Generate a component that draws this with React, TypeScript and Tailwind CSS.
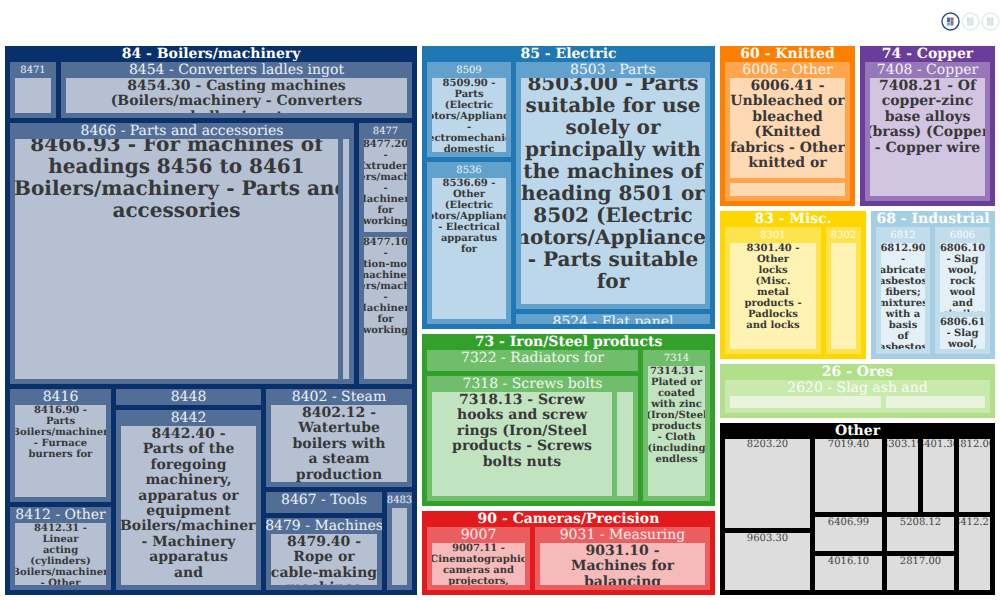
type N = { r: [number, number, number, number]; t?: string; lines?: string[]; size?: 10 | 14 | 20; tsize?: 10 | 14; kids?: N[] };
type G = N & { bg: string; mid: string; leaf: string };

const F: Record<number, string> = {
  10: "text-[10px] leading-[11px]",
  14: "text-[14px] leading-[15.4px]",
  20: "text-[20px] leading-[22px]",
};
const OFF: Record<number, string> = { 10: "mt-0", 14: "mt-[1px]", 20: "-mt-[6px]" };

function pos(r: N["r"], p: N["r"]) {
  return { left: r[0] - p[0], top: r[1] - p[1], width: r[2] - r[0], height: r[3] - r[1] };
}

function Line({ s }: { s: string }) {
  return (
    <div className="flex justify-center whitespace-pre">
      <span className="shrink-0">{s}</span>
    </div>
  );
}

function Leaf({ n, p, g }: { n: N; p: N["r"]; g: G }) {
  const s = n.size ?? 10;
  return (
    <div className={`absolute overflow-hidden ${g.leaf}`} style={pos(n.r, p)}>
      <div className={`${F[s]} ${OFF[s]} font-bold text-[#383838]`}>
        {(n.lines ?? []).map((l, i) => (
          <Line key={i} s={l} />
        ))}
      </div>
    </div>
  );
}

function Mid({ n, p, g }: { n: N; p: N["r"]; g: G }) {
  const ts = n.tsize ?? 14;
  return (
    <div className={`absolute overflow-hidden ${g.mid}`} style={pos(n.r, p)}>
      <div className={`h-4 ${ts === 14 ? "text-[14px] leading-[16px]" : "text-[10px] leading-[18px]"} text-white/90`}>
        <Line s={n.t ?? ""} />
      </div>
      {(n.kids ?? []).map((k, i) => (
        <Leaf key={i} n={k} p={n.r} g={g} />
      ))}
    </div>
  );
}

function Group({ g }: { g: G }) {
  return (
    <div className={`absolute overflow-hidden ${g.bg}`} style={pos(g.r, [0, 0, 0, 0])}>
      <div className="h-4 text-[14px] leading-[17px] font-bold text-white">
        <Line s={g.t ?? ""} />
      </div>
      {(g.kids ?? []).map((k, i) =>
        k.kids ? <Mid key={i} n={k} p={g.r} g={g} /> : <OtherLeaf key={i} n={k} p={g.r} />
      )}
    </div>
  );
}

function OtherLeaf({ n, p }: { n: N; p: N["r"] }) {
  return (
    <div className="absolute overflow-hidden bg-[#dddddd] text-[10px] leading-[11px] text-[#444444]" style={pos(n.r, p)}>
      <div className="mt-0">
        <Line s={n.t ?? ""} />
      </div>
    </div>
  );
}

const groups: G[] = [
  {
    t: "84 - Boilers/machinery", r: [5, 46, 417, 595], bg: "bg-[#08306b]", mid: "bg-[#526e97]", leaf: "bg-[#b5c1d3]",
    kids: [
      { t: "8471", tsize: 10, r: [10, 62, 56, 118], kids: [{ r: [15, 78, 51, 113] }] },
      { t: "8454 - Converters ladles ingot", r: [61, 62, 412, 118], kids: [{ r: [66, 78, 407, 113], size: 14, lines: ["8454.30 - Casting machines", "(Boilers/machinery - Converters", "ladles ingot"] }] },
      { t: "8466 - Parts and accessories", r: [10, 123, 354, 384], kids: [
        { r: [15, 139, 338, 379], size: 20, lines: ["8466.93 - For machines of", "headings 8456 to 8461", "(Boilers/machinery - Parts and", "accessories"] },
        { r: [343, 139, 349, 379] },
      ] },
      { t: "8477", tsize: 10, r: [359, 123, 412, 384], kids: [
        { r: [364, 139, 407, 232], lines: ["8477.20", "-", "Extruders", "(Boilers/machinery", "-", "Machinery", "for", "working"] },
        { r: [364, 237, 407, 379], lines: ["8477.10", "-", "Injection-molding", "machines", "(Boilers/machinery", "-", "Machinery", "for", "working"] },
      ] },
      { t: "8416", r: [10, 389, 111, 502], kids: [{ r: [15, 405, 106, 497], lines: ["8416.90 -", "Parts", "(Boilers/machinery", "- Furnace", "burners for"] }] },
      { t: "8412 - Other", r: [10, 507, 111, 590], kids: [{ r: [15, 523, 106, 585], lines: ["8412.31 -", "Linear", "acting", "(cylinders)", "(Boilers/machinery", "- Other"] }] },
      { t: "8448", r: [116, 389, 261, 405], kids: [] },
      { t: "8442", r: [116, 410, 261, 590], kids: [{ r: [121, 426, 256, 585], size: 14, lines: ["8442.40 -", "Parts of the", "foregoing", "machinery,", "apparatus or", "equipment", "(Boilers/machinery", "- Machinery", "apparatus", "and"] }] },
      { t: "8402 - Steam", r: [266, 389, 412, 487], kids: [{ r: [271, 405, 407, 482], size: 14, lines: ["8402.12 -", "Watertube", "boilers with", "a steam", "production"] }] },
      { t: "8467 - Tools", r: [266, 492, 382, 513], kids: [] },
      { t: "8479 - Machines", r: [266, 518, 382, 590], kids: [{ r: [271, 534, 377, 585], size: 14, lines: ["8479.40 -", "Rope or", "cable-making", "machines"] }] },
      { t: "8483", tsize: 10, r: [387, 492, 412, 590], kids: [{ r: [392, 508, 407, 585] }] },
    ],
  },
  {
    t: "85 - Electric", r: [422, 46, 715, 329], bg: "bg-[#1f78b4]", mid: "bg-[#62a1cb]", leaf: "bg-[#bcd7e9]",
    kids: [
      { t: "8509", tsize: 10, r: [427, 62, 511, 157], kids: [{ r: [432, 78, 506, 152], lines: ["8509.90 -", "Parts", "(Electric", "motors/Appliances", "-", "Electromechanical", "domestic"] }] },
      { t: "8536", tsize: 10, r: [427, 162, 511, 324], kids: [{ r: [432, 178, 506, 319], lines: ["8536.69 -", "Other", "(Electric", "motors/Appliances", "- Electrical", "apparatus", "for"] }] },
      { t: "8503 - Parts", r: [516, 62, 710, 309], kids: [{ r: [521, 78, 705, 304], size: 20, lines: ["8503.00 - Parts", "suitable for use", "solely or", "principally with", "the machines of", "heading 8501 or", "8502 (Electric", "motors/Appliances", "- Parts suitable", "for"] }] },
      { t: "8524 - Flat panel", r: [516, 314, 710, 324], kids: [] },
    ],
  },
  {
    t: "73 - Iron/Steel products", r: [422, 334, 715, 506], bg: "bg-[#33a02c]", mid: "bg-[#70bd6b]", leaf: "bg-[#c2e3c0]",
    kids: [
      { t: "7322 - Radiators for", r: [427, 350, 638, 371], kids: [] },
      { t: "7318 - Screws bolts", r: [427, 376, 638, 501], kids: [
        { r: [432, 392, 612, 496], size: 14, lines: ["7318.13 - Screw", "hooks and screw", "rings (Iron/Steel", "products - Screws", "bolts nuts"] },
        { r: [617, 392, 633, 496] },
      ] },
      { t: "7314", tsize: 10, r: [643, 350, 710, 501], kids: [{ r: [648, 366, 705, 496], lines: ["7314.31 -", "Plated or", "coated", "with zinc", "(Iron/Steel", "products", "- Cloth", "(including", "endless"] }] },
    ],
  },
  {
    t: "90 - Cameras/Precision", r: [422, 511, 715, 595], bg: "bg-[#e31a1c]", mid: "bg-[#eb5e60]", leaf: "bg-[#f7baba]",
    kids: [
      { t: "9007", r: [427, 527, 530, 590], kids: [{ r: [432, 543, 525, 585], lines: ["9007.11 -", "Cinematographic", "cameras and", "projectors,"] }] },
      { t: "9031 - Measuring", r: [535, 527, 710, 590], kids: [{ r: [540, 543, 705, 585], size: 14, lines: ["9031.10 -", "Machines for", "balancing"] }] },
    ],
  },
  {
    t: "60 - Knitted", r: [720, 46, 855, 206], bg: "bg-[#ff7f00]", mid: "bg-[#ffa54d]", leaf: "bg-[#ffd9b3]",
    kids: [
      { t: "6006 - Other", r: [725, 62, 850, 201], kids: [
        { r: [730, 78, 845, 178], size: 14, lines: ["6006.41 -", "Unbleached or", "bleached", "(Knitted", "fabrics - Other", "knitted or"] },
        { r: [730, 183, 845, 196] },
      ] },
    ],
  },
  {
    t: "74 - Copper", r: [860, 46, 995, 206], bg: "bg-[#6a3d9a]", mid: "bg-[#9777b8]", leaf: "bg-[#d2c5e1]",
    kids: [
      { t: "7408 - Copper", r: [865, 62, 990, 201], kids: [{ r: [870, 78, 985, 196], size: 14, lines: ["7408.21 - Of", "copper-zinc", "base alloys", "(brass) (Copper", "- Copper wire"] }] },
    ],
  },
  {
    t: "83 - Misc.", r: [720, 211, 866, 359], bg: "bg-[#ffd700]", mid: "bg-[#ffe34d]", leaf: "bg-[#fff3b3]",
    kids: [
      { t: "8301", tsize: 10, r: [725, 227, 821, 354], kids: [{ r: [730, 243, 816, 349], lines: ["8301.40 -", "Other", "locks", "(Misc.", "metal", "products -", "Padlocks", "and locks"] }] },
      { t: "8302", tsize: 10, r: [826, 227, 861, 354], kids: [{ r: [831, 243, 856, 349] }] },
    ],
  },
  {
    t: "68 - Industrial", r: [871, 211, 995, 359], bg: "bg-[#a6cee3]", mid: "bg-[#c1ddeb]", leaf: "bg-[#e4f0f7]",
    kids: [
      { t: "6812", tsize: 10, r: [876, 227, 930, 354], kids: [{ r: [881, 243, 925, 349], lines: ["6812.90", "-", "Fabricated", "asbestos", "fibers;", "mixtures", "with a", "basis", "of", "asbestos"] }] },
      { t: "6806", tsize: 10, r: [935, 227, 990, 354], kids: [
        { r: [940, 243, 985, 312], lines: ["6806.10", "- Slag", "wool,", "rock", "wool", "and", "similar"] },
        { r: [940, 317, 985, 349], lines: ["6806.61", "- Slag", "wool,"] },
      ] },
    ],
  },
  {
    t: "26 - Ores", r: [720, 364, 995, 418], bg: "bg-[#b2df8a]", mid: "bg-[#c9e9ad]", leaf: "bg-[#e8f5dc]",
    kids: [
      { t: "2620 - Slag ash and", r: [725, 380, 990, 413], kids: [{ r: [730, 396, 881, 408] }, { r: [886, 396, 985, 408] }] },
    ],
  },
  {
    t: "Other", r: [720, 423, 995, 595], bg: "bg-black", mid: "", leaf: "",
    kids: [
      { t: "8203.20", r: [725, 439, 810, 528] },
      { t: "9603.30", r: [725, 533, 810, 590] },
      { t: "7019.40", r: [815, 439, 882, 512] },
      { t: "8303.19", r: [887, 439, 918, 512] },
      { t: "8401.30", r: [923, 439, 954, 512] },
      { t: "2812.00", r: [959, 439, 990, 512] },
      { t: "6406.99", r: [815, 517, 882, 551] },
      { t: "5208.12", r: [887, 517, 954, 551] },
      { t: "8412.21", r: [959, 517, 990, 590] },
      { t: "4016.10", r: [815, 556, 882, 590] },
      { t: "2817.00", r: [887, 556, 954, 590] },
    ],
  },
];

function ModeIcon({ on }: { on?: boolean }) {
  const c = on ? ["#3b6fb0", "#c0504d", "#7f9ccb", "#6b7fa8"] : ["#d5e3dc", "#d5e3dc", "#d5e3dc", "#d5e3dc"];
  return (
    <svg width="19" height="19" viewBox="0 0 19 19" className="block">
      <circle cx="9.5" cy="9.5" r="8.5" fill="white" stroke={on ? "#2c4a80" : "#e3ecea"} strokeWidth="1.4" />
      <rect x="6" y="5.5" width="3" height="4.5" fill={c[0]} />
      <rect x="9.5" y="5.5" width="3" height="3" fill={c[1]} />
      <rect x="6" y="10.5" width="3" height="3" fill={c[2]} />
      <rect x="9.5" y="8.5" width="3" height="5" fill={c[3]} />
    </svg>
  );
}

export default function App() {
  return (
    <div className="relative h-[600px] w-[1000px] overflow-hidden bg-white font-['DejaVu_Serif',serif] [text-rendering:geometricPrecision]">
      <div className="absolute left-[941px] top-[12px] flex gap-[1px]">
        <ModeIcon on />
        <ModeIcon />
        <ModeIcon />
      </div>
      {groups.map((g, i) => (
        <Group key={i} g={g} />
      ))}
    </div>
  );
}
